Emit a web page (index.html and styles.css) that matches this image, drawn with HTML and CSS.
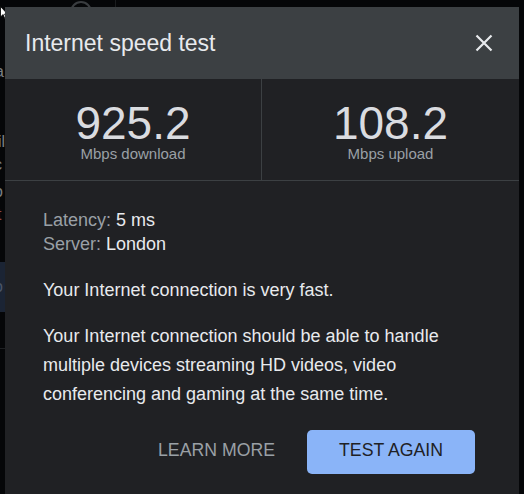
FILE: index.html
```html
<!DOCTYPE html>
<html>
<head>
<meta charset="utf-8">
<link rel="stylesheet" href="styles.css">
</head>
<body>
<div class="backdrop">
  <span class="bg-arc"></span>
  <span class="bg-vline"></span>
  <span class="bg-frag f1">a</span>
  <span class="bg-frag f2">il</span>
  <span class="bg-frag f3">c</span>
  <span class="bg-frag f4">o</span>
  <span class="bg-frag f5">t</span>
  <span class="bg-navy"><span class="navy-o">o</span></span>
  <span class="bg-hline"></span>
  <svg class="cursor" width="8" height="13" viewBox="0 0 8 13"><path d="M0.5 0.5 L0.5 11 L3 8.5 L4.8 12.5 L6.3 11.8 L4.6 8 L7.5 8 Z" fill="#fff" stroke="#000" stroke-width="0.8"/></svg>
</div>
<div class="dialog">
  <div class="header">
    <div class="title">Internet speed test</div>
    <svg class="close" width="18" height="18" viewBox="0 0 18 18"><path d="M1.5 1.5 L16.5 16.5 M16.5 1.5 L1.5 16.5" stroke="#e8eaed" stroke-width="2.2" fill="none"/></svg>
  </div>
  <div class="stats">
    <div class="stat stat-left">
      <div class="num">925.2</div>
      <div class="label">Mbps download</div>
    </div>
    <div class="stat">
      <div class="num">108.2</div>
      <div class="label">Mbps upload</div>
    </div>
  </div>
  <div class="content">
    <div class="meta"><span class="key">Latency:</span> 5 ms</div>
    <div class="meta"><span class="key">Server:</span> London</div>
    <p class="para first">Your Internet connection is very fast.</p>
    <p class="para">Your Internet connection should be able to handle multiple devices streaming HD videos, video conferencing and gaming at the same time.</p>
    <div class="actions">
      <span class="btn-text">LEARN MORE</span>
      <span class="btn-primary">TEST AGAIN</span>
    </div>
  </div>
</div>
</body>
</html>
```
FILE: styles.css
```css
html, body {
  margin: 0;
  padding: 0;
  background: #050608;
  width: 524px;
  height: 494px;
  overflow: hidden;
  font-family: "Liberation Sans", Arial, sans-serif;
}
body { position: relative; }

.backdrop { position: absolute; inset: 0; }
.bg-arc {
  position: absolute; left: 70px; top: 1px;
  width: 22px; height: 22px; border-radius: 50%;
  border: 2px solid #3a3d40; box-sizing: border-box;
}
.bg-vline {
  position: absolute; left: 115px; top: 0; width: 1px; height: 7px; background: #1a1c1e;
}
.bg-frag {
  position: absolute; color: #7a7e82; font-size: 16px; line-height: 16px;
}
.f1 { left: -5px; top: 64px; }
.f2 { left: -2px; top: 134px; }
.f3 { left: -6px; top: 157px; }
.f4 { left: -6px; top: 184px; }
.f5 { left: -3px; top: 207px; color: #8a4a4a; }
.bg-navy {
  position: absolute; left: 0; top: 262px; width: 8px; height: 50px; background: #1b2434;
}
.navy-o { position: absolute; left: -6px; top: 17px; color: #4a5568; font-size: 16px; line-height: 16px; }
.bg-hline {
  position: absolute; left: 0; top: 348px; width: 6px; height: 1px; background: #1e2023;
}
.cursor { position: absolute; left: 0; top: 6px; }

.dialog {
  position: absolute;
  left: 5px;
  top: 7px;
  width: 514px;
  height: 500px;
  background: #202124;
  color: #e8eaed;
}

.header {
  height: 72px;
  background: #3c4043;
  display: flex;
  align-items: center;
  justify-content: space-between;
  padding: 0 26px 0 20px;
}
.title {
  font-size: 23px;
  color: #e8eaed;
  line-height: 1;
}
.close { display: block; margin-top: -1px; }

.stats {
  display: grid;
  grid-template-columns: 257px 257px;
  border-bottom: 1px solid #3c4043;
}
.stat {
  text-align: center;
  padding: 21px 0 19px;
}
.stat-left { border-right: 1px solid #3c4043; }
.num {
  font-size: 46px;
  line-height: 46px;
  color: #dadce0;
}
.label {
  font-size: 15px;
  line-height: 15px;
  color: #9aa0a6;
}

.content {
  padding: 27px 44px 0 38px;
}
.meta {
  font-size: 18px;
  line-height: 24px;
  color: #e8eaed;
}
.key { color: #9aa0a6; }
.para {
  margin: 17px 0 0;
  font-size: 18px;
  line-height: 29px;
  color: #e8eaed;
}
.para.first { margin-top: 20px; }

.actions {
  display: flex;
  justify-content: flex-end;
  align-items: center;
  gap: 32px;
  margin-top: 21px;
}
.btn-text {
  font-size: 17.7px;
  color: #9aa0a6;
  line-height: 40px;
  padding-bottom: 4px;
}
.btn-primary {
  width: 168px;
  height: 44px;
  box-sizing: border-box;
  background: #8ab4f8;
  color: #202124;
  border-radius: 5px;
  font-size: 17.7px;
  line-height: 40px;
  text-align: center;
}
```
